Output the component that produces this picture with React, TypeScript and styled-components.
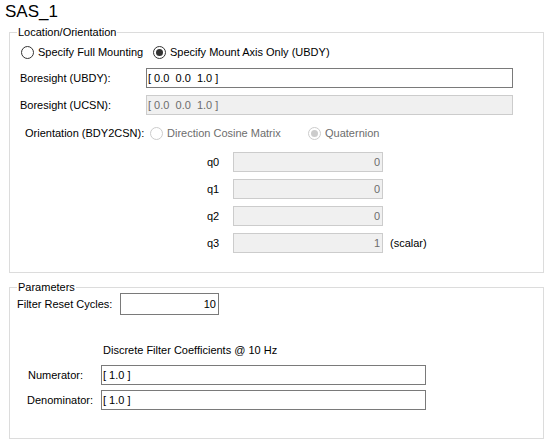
import React from 'react';
import styled, { createGlobalStyle } from 'styled-components';

const GlobalStyle = createGlobalStyle`
  html, body {
    margin: 0;
    padding: 0;
    background: #ffffff;
  }
  body {
    font-family: 'Liberation Sans', Arial, sans-serif;
    font-size: 11px;
    color: #000000;
  }
  * {
    box-sizing: border-box;
  }
`;

const App: React.FC = () => {
  const quats = [
    { name: 'q0', value: '0' },
    { name: 'q1', value: '0' },
    { name: 'q2', value: '0' },
    { name: 'q3', value: '1', note: '(scalar)' },
  ];

  return (
    <Page>
      <GlobalStyle />
      <Title>SAS_1</Title>

      <GroupBox $height={241}>
        <Legend>Location/Orientation</Legend>
        <Row $top={3} $indent={11}>
          <Option $width={132}>
            <Radio />
            <span>Specify Full Mounting</span>
          </Option>
          <Option>
            <Radio $checked />
            <span>Specify Mount Axis Only (UBDY)</span>
          </Option>
        </Row>
        <Row $top={6} $indent={10}>
          <Label $width={126}>Boresight (UBDY):</Label>
          <TextBox $width={367} readOnly value="[ 0.0  0.0  1.0 ]" />
        </Row>
        <Row $top={7} $indent={10}>
          <Label $width={126}>Boresight (UCSN):</Label>
          <TextBox $width={367} disabled value="[ 0.0  0.0  1.0 ]" />
        </Row>
        <Row $top={8} $indent={15}>
          <Label $width={125}>Orientation (BDY2CSN):</Label>
          <Option $width={158} $disabled>
            <Radio $disabled />
            <span>Direction Cosine Matrix</span>
          </Option>
          <Option $disabled>
            <Radio $checked $disabled />
            <span>Quaternion</span>
          </Option>
        </Row>
        {quats.map((q, i) => (
          <Row key={q.name} $top={i === 0 ? 9 : 7} $indent={197}>
            <Label $width={26}>{q.name}</Label>
            <TextBox $width={150} $align="right" disabled value={q.value} />
            {q.note && <Note>{q.note}</Note>}
          </Row>
        ))}
      </GroupBox>

      <GroupBox $height={152} $top={14}>
        <Legend>Parameters</Legend>
        <Row $top={-1} $indent={7} $height={22}>
          <Label $width={103}>Filter Reset Cycles:</Label>
          <TextBox $width={99} $align="right" readOnly value="10" />
        </Row>
        <Row $top={28} $indent={93} $height={13}>
          <span>Discrete Filter Coefficients @ 10 Hz</span>
        </Row>
        <Row $top={9} $indent={18}>
          <Label $width={73}>Numerator:</Label>
          <TextBox $width={325} readOnly value="[ 1.0 ]" />
        </Row>
        <Row $top={5} $indent={17}>
          <Label $width={74}>Denominator:</Label>
          <TextBox $width={325} readOnly value="[ 1.0 ]" />
        </Row>
      </GroupBox>
    </Page>
  );
};
export default App;

const Page = styled.main`
  padding: 2px 0 0 5px;
  width: 547px;
  height: 445px;
  overflow: hidden;
`;

const Title = styled.h1`
  margin: 0;
  font-size: 17px;
  font-weight: normal;
  line-height: 20px;
`;

const GroupBox = styled.section<{ $height: number; $top?: number }>`
  display: flex;
  flex-direction: column;
  margin: ${(p) => p.$top ?? 10}px 0 0 4px;
  width: 535px;
  height: ${(p) => p.$height}px;
  border: 1px solid #dcdcdc;
`;

const Legend = styled.div`
  margin: -7px 0 0 7px;
  padding: 0 1px;
  width: fit-content;
  line-height: 13px;
  background: #ffffff;
`;

const Row = styled.div<{ $top: number; $indent: number; $height?: number }>`
  display: flex;
  align-items: center;
  margin-top: ${(p) => p.$top}px;
  padding-left: ${(p) => p.$indent}px;
  height: ${(p) => p.$height ?? 20}px;
  white-space: nowrap;
`;

const Label = styled.span<{ $width: number }>`
  flex: none;
  width: ${(p) => p.$width}px;
`;

const Option = styled.label<{ $width?: number; $disabled?: boolean }>`
  display: flex;
  align-items: center;
  gap: 4px;
  flex: none;
  width: ${(p) => (p.$width ? `${p.$width}px` : 'auto')};
  color: ${(p) => (p.$disabled ? '#6d6d6d' : '#000000')};
`;

const Radio = styled.span<{ $checked?: boolean; $disabled?: boolean }>`
  display: flex;
  align-items: center;
  justify-content: center;
  flex: none;
  width: 13px;
  height: 13px;
  border-radius: 50%;
  border: 1px solid ${(p) => (p.$disabled ? '#cccccc' : '#333333')};
  background: #ffffff;

  &::after {
    content: '';
    display: ${(p) => (p.$checked ? 'block' : 'none')};
    width: 7px;
    height: 7px;
    border-radius: 50%;
    background: ${(p) => (p.$disabled ? '#cccccc' : '#333333')};
  }
`;

const TextBox = styled.input<{ $width: number; $align?: 'left' | 'right' }>`
  flex: none;
  width: ${(p) => p.$width}px;
  height: 100%;
  margin: 0;
  padding: 0 ${(p) => (p.$align === 'right' ? 2 : 1)}px 0 ${(p) => (p.$align === 'right' ? 2 : 1)}px;
  border: 1px solid #7a7a7a;
  border-radius: 0;
  background: #ffffff;
  font-family: 'Liberation Sans', Arial, sans-serif;
  font-size: 11px;
  color: #000000;
  text-align: ${(p) => p.$align ?? 'left'};
  white-space: pre;
  outline: none;

  &:disabled {
    border-color: #cccccc;
    background: #f0f0f0;
    color: #6d6d6d;
  }
`;

const Note = styled.span`
  margin-left: 7px;
`;
